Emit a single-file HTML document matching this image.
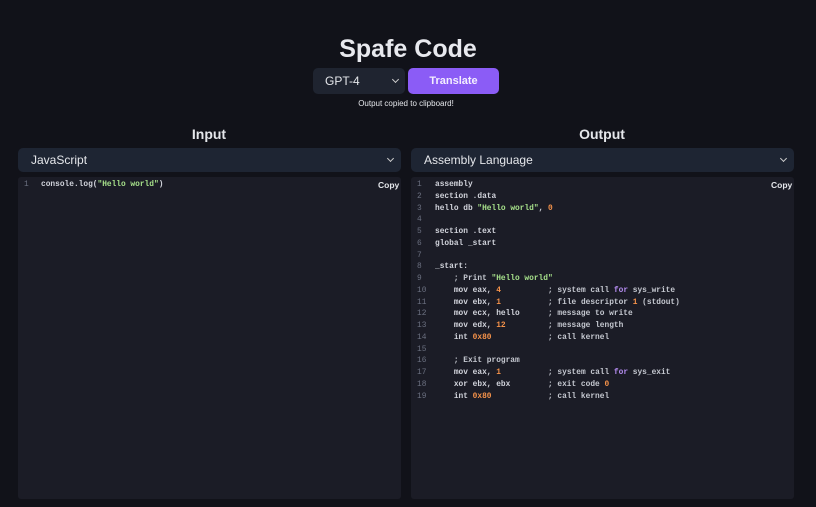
<!DOCTYPE html>
<html><head><style>
*{box-sizing:border-box;margin:0;padding:0}
body{width:816px;height:507px;background:#111219;font-family:"Liberation Sans",sans-serif;color:#e5e7eb;position:relative;overflow:hidden}
.abs{position:absolute}
h1{position:absolute;left:0;width:816px;top:35px;text-align:center;font-size:25px;font-weight:bold;color:#e8e9ee}
.sel{background:#1f2430;border-radius:5px;color:#e5e7eb;font-size:12px}
.chev{position:absolute;width:5px;height:5px;border-right:1.5px solid #ccc;border-bottom:1.5px solid #ccc;transform:rotate(45deg)}
.ed{background:#1b1c26;border-radius:3px}
.code{position:absolute;font-family:"Liberation Mono",monospace;font-size:7.85px;font-weight:bold;line-height:11.75px;white-space:pre;color:#d2d4dc}
.num{color:#6b7080;font-weight:normal}
.s{color:#a6e08a}.n{color:#f5924a}.k{color:#b48cf0}.c{color:#c5c8d0}
.copy{position:absolute;font-size:8.5px;font-weight:bold;color:#e5e7eb}
.ttl{position:absolute;font-size:14px;font-weight:bold;color:#e5e7eb;text-align:center}
</style></head><body>
<h1>Spafe Code</h1>
<div class="abs sel" style="left:313px;top:68px;width:92px;height:26px;padding:6px 0 0 12px">GPT-4<span class="chev" style="left:80px;top:9px"></span></div>
<div class="abs" style="left:408px;top:68px;width:91px;height:26px;background:#8b5cf6;border-radius:5px;color:#f3eefe;font-size:11px;font-weight:bold;text-align:center;line-height:26px">Translate</div>
<div class="abs" style="left:0;width:812px;top:99px;text-align:center;font-size:8px;color:#e5e7eb">Output copied to clipboard!</div>
<div class="ttl" style="left:18px;width:382px;top:126px">Input</div>
<div class="ttl" style="left:411px;width:382px;top:126px">Output</div>
<div class="abs sel" style="left:18px;top:148px;width:383px;height:24px;padding:5px 0 0 13px;background:#1e2533">JavaScript<span class="chev" style="left:370px;top:8px"></span></div>
<div class="abs sel" style="left:411px;top:148px;width:383px;height:24px;padding:5px 0 0 13px;background:#1e2533">Assembly Language<span class="chev" style="left:370px;top:8px"></span></div>
<div class="abs ed" style="left:18px;top:177px;width:383px;height:322px"></div>
<div class="abs ed" style="left:411px;top:177px;width:383px;height:322px"></div>
<div class="copy" style="left:378px;top:180px">Copy</div>
<div class="copy" style="left:771px;top:180px">Copy</div>
<div class="code num" style="left:24px;top:179px">1</div>
<div class="code" style="left:41px;top:179px">console.log(<span class="s">"Hello world"</span>)</div>
<div class="code num" style="left:417px;top:179px">1
2
3
4
5
6
7
8
9
10
11
12
13
14
15
16
17
18
19</div>
<div class="code" style="left:435px;top:179px">assembly
section .data
hello db <span class="s">"Hello world"</span>, <span class="n">0</span>

section .text
global _start

_start:
    <span class="c">; Print </span><span class="s">"Hello world"</span>
    mov eax, <span class="n">4</span>          <span class="c">; system call </span><span class="k">for</span><span class="c"> sys_write</span>
    mov ebx, <span class="n">1</span>          <span class="c">; file descriptor </span><span class="n">1</span><span class="c"> (stdout)</span>
    mov ecx, hello      <span class="c">; message to write</span>
    mov edx, <span class="n">12</span>         <span class="c">; message length</span>
    int <span class="n">0x80</span>            <span class="c">; call kernel</span>

    <span class="c">; Exit program</span>
    mov eax, <span class="n">1</span>          <span class="c">; system call </span><span class="k">for</span><span class="c"> sys_exit</span>
    xor ebx, ebx        <span class="c">; exit code </span><span class="n">0</span>
    int <span class="n">0x80</span>            <span class="c">; call kernel</span></div>
</body></html>
